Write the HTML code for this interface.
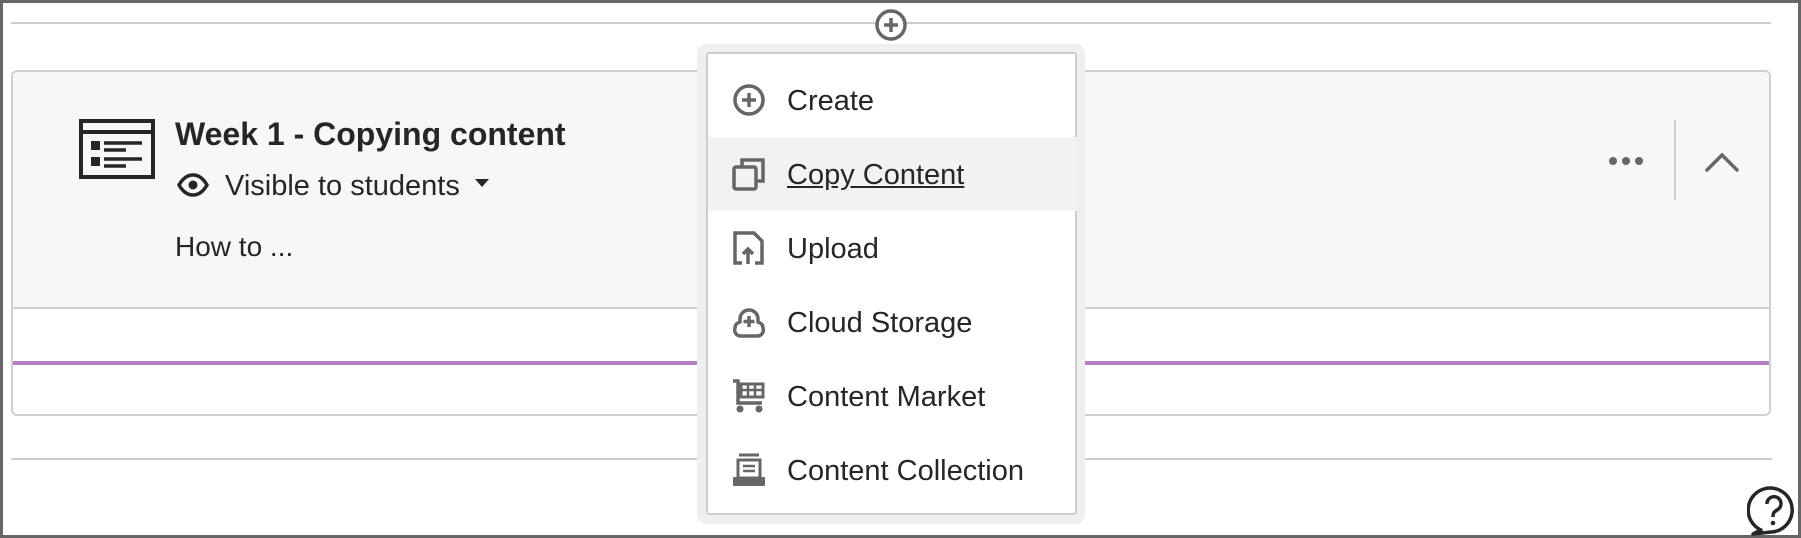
<!DOCTYPE html>
<html><head><style>
*{margin:0;padding:0;box-sizing:border-box}
body{width:1801px;height:538px;position:relative;overflow:hidden;background:#fff;font-family:"Liberation Sans",sans-serif;color:#262626}
.frame{position:absolute;left:0;top:0;width:1801px;height:538px;border:3px solid #666}
.abs{position:absolute}
.line{position:absolute;height:2px;background:#cdcdcd}
.item{position:absolute;left:0;width:371px;height:74px}
.item svg{position:absolute;left:24px;top:20px}
.item span{position:absolute;left:79px;top:21px;font-size:29px;line-height:34px;color:#262626}
</style></head><body>
<div class="frame"></div>
<div class="line" style="left:11px;top:22px;width:1760px"></div>
<svg class="abs" style="left:874px;top:8px" width="34" height="34" viewBox="0 0 34 34"><circle cx="17" cy="17" r="14" fill="#fff" stroke="#666" stroke-width="3.5"/><path d="M17 10v14M10 17h14" stroke="#666" stroke-width="3.5"/></svg>

<div class="abs" style="left:11px;top:70px;width:1760px;height:346px;border:2px solid #d0d0d0;border-radius:6px;background:#fff;overflow:hidden">
 <div class="abs" style="left:0;top:0;width:100%;height:237px;background:#f7f7f7;border-bottom:2px solid #d0d0d0"></div>
 <div class="abs" style="left:0;top:289px;width:100%;height:4px;background:#b87fc6"></div>
</div>
<svg class="abs" style="left:79px;top:119px" width="76" height="60" viewBox="0 0 76 60"><rect x="2" y="2" width="72" height="56" fill="none" stroke="#262626" stroke-width="4"/><path d="M2 13h72" stroke="#262626" stroke-width="4"/><rect x="12" y="22" width="9" height="9" fill="#262626"/><rect x="12" y="38" width="9" height="9" fill="#262626"/><path d="M25 24h38M25 31h22M25 40h38M25 47h22" stroke="#262626" stroke-width="3.5"/></svg>
<div class="abs" style="left:175px;top:114px;font-size:32px;font-weight:bold;line-height:40px;color:#262626">Week 1 - Copying content</div>
<svg class="abs" style="left:177px;top:172px" width="32" height="26" viewBox="0 0 32 26"><path d="M2 13C6 6 11 3 16 3s10 3 14 10c-4 7-9 10-14 10S6 20 2 13z" fill="none" stroke="#262626" stroke-width="3.5"/><circle cx="16" cy="13" r="4.5" fill="#262626"/></svg>
<div class="abs" style="left:225px;top:169px;font-size:29px;line-height:34px;color:#262626">Visible to students</div>
<svg class="abs" style="left:474px;top:178px" width="16" height="10"><path d="M1 1h14L8 9z" fill="#262626"/></svg>
<div class="abs" style="left:175px;top:230px;font-size:28px;line-height:34px;color:#262626">How to ...</div>

<svg class="abs" style="left:1608px;top:155px" width="36" height="12"><circle cx="5" cy="6" r="4" fill="#666"/><circle cx="18" cy="6" r="4" fill="#666"/><circle cx="31" cy="6" r="4" fill="#666"/></svg>
<div class="abs" style="left:1674px;top:120px;width:2px;height:80px;background:#cdcdcd"></div>
<svg class="abs" style="left:1704px;top:150px" width="36" height="24"><path d="M3 20L18 5l15 15" fill="none" stroke="#666" stroke-width="3.5" stroke-linecap="round"/></svg>

<div class="line" style="left:11px;top:458px;width:1761px"></div>

<div class="abs" style="left:697px;top:44px;width:388px;height:480px;background:#efefef;border-radius:10px"></div>
<div class="abs" style="left:706px;top:52px;width:371px;height:463px;background:#fff;border:2px solid #cdcdcd;border-radius:3px">
 <div class="item" style="top:9px"><svg width="34" height="34" viewBox="0 0 34 34"><circle cx="17" cy="17" r="14" fill="none" stroke="#666" stroke-width="3.5"/><path d="M17 10v14M10 17h14" stroke="#666" stroke-width="3.5"/></svg><span>Create</span></div>
 <div class="item" style="top:83px;background:#f2f2f2"><svg width="34" height="34" viewBox="0 0 34 34"><rect x="2" y="10" width="22" height="22" rx="2" fill="none" stroke="#666" stroke-width="3.5"/><path d="M10 9V3h21v21h-6" fill="none" stroke="#666" stroke-width="3.5"/></svg><span style="text-decoration:underline">Copy Content</span></div>
 <div class="item" style="top:157px"><svg width="34" height="34" viewBox="0 0 34 34"><path d="M10 32H3V2h19l8 8v22h-7" fill="none" stroke="#666" stroke-width="3.5"/><path d="M16 33V18M11 23l5-5 5 5" fill="none" stroke="#666" stroke-width="3.5"/></svg><span>Upload</span></div>
 <div class="item" style="top:231px"><svg width="34" height="34" viewBox="0 0 34 34"><path d="M8 31h18a6 6 0 0 0 5-8c0-3-2-5-5-6V14A9 9 0 0 0 8 14v3c-3 1-5 3-5 6a6 6 0 0 0 5 8z" fill="none" stroke="#666" stroke-width="3.5"/><path d="M17 11v11M11.5 16.5h11" stroke="#666" stroke-width="3.5"/></svg><span>Cloud Storage</span></div>
 <div class="item" style="top:305px"><svg width="34" height="34" viewBox="0 0 34 34"><path d="M1 2h5v22h24" fill="none" stroke="#666" stroke-width="3.5"/><rect x="9" y="5" width="22" height="13" fill="none" stroke="#666" stroke-width="3"/><path d="M16 5v13M23 5v13M9 11h22" stroke="#666" stroke-width="2.5"/><circle cx="8" cy="30" r="3.5" fill="#666"/><circle cx="27" cy="30" r="3.5" fill="#666"/></svg><span>Content Market</span></div>
 <div class="item" style="top:379px"><svg width="34" height="34" viewBox="0 0 34 34"><path d="M7 2h20" stroke="#666" stroke-width="3"/><rect x="6" y="7" width="22" height="18" fill="none" stroke="#666" stroke-width="3"/><path d="M11 13h12M11 18h12" stroke="#666" stroke-width="2.5"/><rect x="1" y="24" width="32" height="9" rx="1" fill="#666"/></svg><span>Content Collection</span></div>
</div>

<svg class="abs" style="left:1747px;top:484px" width="52" height="52" viewBox="0 0 52 52"><path d="M14 46A22 22 0 1 1 24 48L6 50l8-4z" fill="none" stroke="#262626" stroke-width="3.5" stroke-linejoin="round"/><path d="M20 20a7 7 0 1 1 10 6c-3 2-4 3-4 7" fill="none" stroke="#262626" stroke-width="3.5"/><circle cx="26" cy="39" r="2.3" fill="#262626"/></svg>
</body></html>
